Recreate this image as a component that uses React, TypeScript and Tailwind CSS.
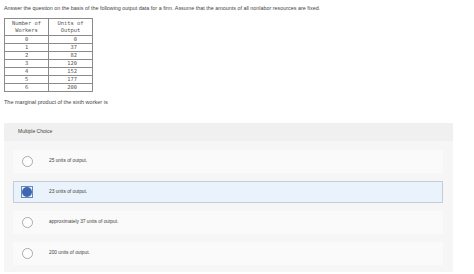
const rows: [string, string][] = [
  ["0", "0"],
  ["1", "37"],
  ["2", "82"],
  ["3", "120"],
  ["4", "152"],
  ["5", "177"],
  ["6", "200"],
];

const options = [
  "25 units of output.",
  "23 units of output.",
  "approximately 37 units of output.",
  "200 units of output.",
];

function Radio({ checked }: { checked: boolean }) {
  if (checked) {
    return (
      <span className="flex h-[12px] w-[12px] items-center justify-center border border-[#6a88b8]">
        <span className="h-[10px] w-[10px] rounded-full bg-[#3d67b1]" />
      </span>
    );
  }
  return <span className="h-[11px] w-[11px] rounded-full border border-[#a9a9a9] bg-white" />;
}

export default function App() {
  const selected = 1;

  return (
    <div className="h-[274px] w-[474px] bg-white pl-[4px] pt-[5px] font-['Liberation_Sans',Arial,sans-serif] text-[#444]">
      <p className="text-[5.4px] leading-[6px]">
        Answer the question on the basis of the following output data for a firm. Assume that the amounts of all nonlabor resources are fixed.
      </p>

      <table className="mt-[7px] w-[89px] table-fixed border-collapse font-['DejaVu_Sans_Mono',monospace] text-[5.4px] leading-[7px] text-[#555]">
        <thead>
          <tr className="h-[16.5px]">
            <th className="w-[44px] border border-[#8a8a8a] font-normal">
              Number of
              <br />
              Workers
            </th>
            <th className="border border-[#8a8a8a] font-normal">
              Units of
              <br />
              Output
            </th>
          </tr>
        </thead>
        <tbody>
          {rows.map(([w, u]) => (
            <tr key={w} className="h-[7.8px]">
              <td className="border border-[#8a8a8a] text-center">{w}</td>
              <td className="border border-[#8a8a8a] pr-[15px] text-right">{u}</td>
            </tr>
          ))}
        </tbody>
      </table>

      <p className="mt-[7px] text-[5.5px] leading-[6px]">The marginal product of the sixth worker is</p>

      <div className="mt-[18px] h-[149px] w-[449px] bg-[#f6f6f6]">
        <div className="flex h-[18px] items-center bg-[#f0f0f0] pl-[14px] text-[5px]">Multiple Choice</div>
        <div className="flex flex-col gap-[8px] pl-[9px] pr-[10px] pt-[9px]">
          {options.map((o, i) => (
            <div
              key={o}
              className={
                i === selected
                  ? "flex h-[22px] items-center border border-[#c3ccd8] bg-[#eaf2fc] pl-[7px]"
                  : "flex h-[23px] items-center bg-[#fafafa] pl-[8px]"
              }
            >
              <span className="flex w-[12px] justify-center">
                <Radio checked={i === selected} />
              </span>
              <span className="ml-[16px] text-[4.8px]">{o}</span>
            </div>
          ))}
        </div>
      </div>
    </div>
  );
}
